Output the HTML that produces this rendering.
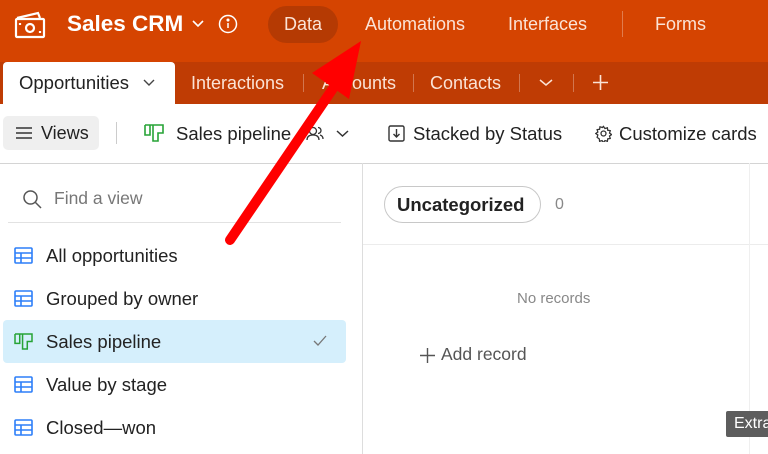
<!DOCTYPE html>
<html><head><meta charset="utf-8"><style>
*{box-sizing:border-box;margin:0;padding:0}
body{width:768px;height:454px;overflow:hidden;background:#fff;font-family:"Liberation Sans",sans-serif;color:#222;position:relative}
.a{position:absolute;white-space:nowrap}
.top{position:absolute;left:0;top:0;width:768px;height:62px;background:#d54401}
.tabs{position:absolute;left:0;top:62px;width:768px;height:42px;background:#bf3c04}
.w{color:#fff}
.tb{color:#fbe3d6;font-size:18px}
.sep{position:absolute;width:1px;background:rgba(255,255,255,.3)}
.item{position:absolute;left:14px;font-size:18.5px;color:#222}
.tool{font-size:18.5px;color:#222}
</style></head><body>
<div class="top"></div>
<svg class="a" style="left:14px;top:10px" width="34" height="30" viewBox="0 0 34 30" fill="none" stroke="#fff" stroke-width="2.2"><path d="M3 8 L24 3 L26 8"/><rect x="2" y="9" width="28" height="18" rx="1"/><circle cx="16" cy="18" r="4"/><path d="M6 13v2M26 21v2"/></svg>
<div class="a w" style="left:67px;top:11px;font-size:22.5px;font-weight:bold">Sales CRM</div>
<svg class="a" style="left:192px;top:20px" width="12" height="8" viewBox="0 0 12 8"><path d="M1 1l5 5 5-5" stroke="#fff" stroke-width="1.6" fill="none"/></svg>
<svg class="a" style="left:218px;top:14px" width="20" height="20" viewBox="0 0 20 20" fill="none" stroke="#fff" stroke-width="1.5"><circle cx="10" cy="10" r="8.5"/><path d="M10 9v5"/><circle cx="10" cy="6" r=".8" fill="#fff"/></svg>
<div class="a" style="left:268px;top:6px;width:70px;height:37px;border-radius:19px;background:#b53a03"></div>
<div class="a tb" style="left:284px;top:14px">Data</div>
<div class="a tb" style="left:365px;top:14px">Automations</div>
<div class="a tb" style="left:508px;top:14px">Interfaces</div>
<div class="sep" style="left:622px;top:11px;height:26px"></div>
<div class="a tb" style="left:655px;top:14px">Forms</div>
<div class="tabs"></div>
<div class="a" style="left:3px;top:62px;width:172px;height:42px;background:#fff;border-radius:4px 4px 0 0"></div>
<div class="a" style="left:19px;top:72px;font-size:18.5px;color:#222">Opportunities</div>
<svg class="a" style="left:143px;top:79px" width="12" height="8" viewBox="0 0 12 8"><path d="M1 1l5 5 5-5" stroke="#444" stroke-width="1.4" fill="none"/></svg>
<div class="a tb" style="left:191px;top:73px">Interactions</div>
<div class="sep" style="left:303px;top:74px;height:18px"></div>
<div class="a tb" style="left:322px;top:73px">Accounts</div>
<div class="sep" style="left:413px;top:74px;height:18px"></div>
<div class="a tb" style="left:430px;top:73px">Contacts</div>
<div class="sep" style="left:519px;top:74px;height:18px"></div>
<svg class="a" style="left:539px;top:79px" width="14" height="8" viewBox="0 0 14 8"><path d="M1 1l6 5 6-5" stroke="#fbe3d6" stroke-width="1.5" fill="none"/></svg>
<div class="sep" style="left:573px;top:74px;height:18px"></div>
<svg class="a" style="left:592px;top:74px" width="17" height="17" viewBox="0 0 17 17"><path d="M8.5 1v15M1 8.5h15" stroke="#fbe3d6" stroke-width="1.6"/></svg>
<!-- toolbar -->
<div class="a" style="left:3px;top:116px;width:96px;height:34px;background:#efefef;border-radius:5px"></div>
<svg class="a" style="left:15px;top:126px" width="18" height="14" viewBox="0 0 18 14"><path d="M1 2h16M1 7h16M1 12h16" stroke="#333" stroke-width="1.5"/></svg>
<div class="a tool" style="left:41px;top:123px;font-size:18px">Views</div>
<div class="a" style="left:116px;top:122px;width:1px;height:22px;background:#ccc"></div>
<svg class="a" style="left:144px;top:124px" width="20" height="18" viewBox="0 0 20 18" fill="none" stroke="#27a336" stroke-width="1.6"><path d="M1 1h18v8h-5v8h-5v-8M1 1v10h5V1M9 1v8"/></svg>
<div class="a tool" style="left:176px;top:123px">Sales pipeline</div>
<svg class="a" style="left:306px;top:125px" width="18" height="16" viewBox="0 0 18 16" fill="none" stroke="#333" stroke-width="1.3"><circle cx="7" cy="6" r="3.5"/><path d="M1 15c0-4 3-5 6-5s6 1 6 5M12 2.5a3 3 0 010 6M14 10c2 .5 3 2 3 4"/></svg>
<svg class="a" style="left:336px;top:130px" width="13" height="8" viewBox="0 0 13 8"><path d="M1 1l5.5 5 5.5-5" stroke="#333" stroke-width="1.5" fill="none"/></svg>
<svg class="a" style="left:388px;top:125px" width="17" height="17" viewBox="0 0 17 17" fill="none" stroke="#333" stroke-width="1.4"><rect x="1" y="1" width="15" height="15" rx="1.5"/><path d="M8.5 4v8M5.5 9l3 3 3-3"/></svg>
<div class="a tool" style="left:413px;top:123px">Stacked by Status</div>
<svg class="a" style="left:595px;top:125px" width="17" height="17" viewBox="0 0 24 24" fill="none" stroke="#333" stroke-width="1.8"><circle cx="12" cy="12" r="3.5"/><path d="M12 2l2 3 3.5-1 .5 3.5 3.5.5-1 3.5 3 2-3 2 1 3.5-3.5.5-.5 3.5-3.5-1-2 3-2-3-3.5 1-.5-3.5L3 17.5 4 14l-3-2 3-2-1-3.5L6.5 6 7 2.5 10.5 3.5z"/></svg>
<div class="a tool" style="left:619px;top:123px">Customize cards</div>
<div class="a" style="left:0;top:163px;width:768px;height:1px;background:#d4d4d4"></div>
<!-- sidebar -->
<div class="a" style="left:362px;top:163px;width:1px;height:291px;background:#ddd"></div>
<svg class="a" style="left:22px;top:189px" width="20" height="20" viewBox="0 0 20 20" fill="none" stroke="#555" stroke-width="1.5"><circle cx="8.5" cy="8.5" r="6.5"/><path d="M13.5 13.5L19 19"/></svg>
<div class="a" style="left:54px;top:188px;font-size:17.5px;color:#777">Find a view</div>
<div class="a" style="left:8px;top:222px;width:333px;height:1px;background:#e2e2e2"></div>
<div class="a" style="left:3px;top:320px;width:343px;height:43px;background:#d5effc;border-radius:4px"></div>
<svg width="0" height="0"><defs><symbol id="g" viewBox="0 0 19 17"><g fill="none" stroke="#2d7ff9" stroke-width="1.6"><rect x="1" y="1" width="17" height="15" rx="1"/><path d="M1 6h17M1 11h17M7 6v10"/></g></symbol></defs></svg>
<svg class="a" style="left:14px;top:247px" width="19" height="17"><use href="#g"/></svg>
<div class="a item" style="left:46px;top:245px">All opportunities</div>
<svg class="a" style="left:14px;top:290px" width="19" height="17"><use href="#g"/></svg>
<div class="a item" style="left:46px;top:288px">Grouped by owner</div>
<svg class="a" style="left:14px;top:333px" width="19" height="17" viewBox="0 0 20 18" fill="none" stroke="#27a336" stroke-width="1.6"><path d="M1 1h18v8h-5v8h-5v-8M1 1v10h5V1M9 1v8"/></svg>
<div class="a item" style="left:46px;top:331px">Sales pipeline</div>
<svg class="a" style="left:313px;top:335px" width="14" height="11" viewBox="0 0 14 11"><path d="M1 6l4 4 8-9" stroke="#777" stroke-width="1.3" fill="none"/></svg>
<svg class="a" style="left:14px;top:376px" width="19" height="17"><use href="#g"/></svg>
<div class="a item" style="left:46px;top:374px">Value by stage</div>
<svg class="a" style="left:14px;top:419px" width="19" height="17"><use href="#g"/></svg>
<div class="a item" style="left:46px;top:417px">Closed—won</div>
<!-- board -->
<div class="a" style="left:384px;top:186px;width:157px;height:37px;border:1px solid #c8c8c8;border-radius:19px"></div>
<div class="a" style="left:397px;top:194px;font-size:18.5px;font-weight:bold;color:#222">Uncategorized</div>
<div class="a" style="left:555px;top:196px;font-size:16px;color:#888">0</div>
<div class="a" style="left:363px;top:244px;width:405px;height:1px;background:#ececec"></div>
<div class="a" style="left:749px;top:163px;width:1px;height:291px;background:#efefef"></div>
<div class="a" style="left:517px;top:290px;font-size:15px;color:#888">No records</div>
<svg class="a" style="left:419px;top:347px" width="17" height="17" viewBox="0 0 17 17"><path d="M8.5 1v15M1 8.5h15" stroke="#555" stroke-width="1.4"/></svg>
<div class="a" style="left:441px;top:344px;font-size:17.5px;color:#555">Add record</div>
<div class="a" style="left:726px;top:411px;width:50px;height:26px;background:#5d5d5d;border-radius:2px;color:#fff;font-size:16px;padding:4px 0 0 8px">Extra</div>
<!-- arrow -->
<svg class="a" style="left:0;top:0" width="768" height="454"><path d="M230 240L336 84" stroke="#ff0000" stroke-width="10" stroke-linecap="round"/><path d="M361 41L312 73L349 99Z" fill="#ff0000"/></svg>
</body></html>
